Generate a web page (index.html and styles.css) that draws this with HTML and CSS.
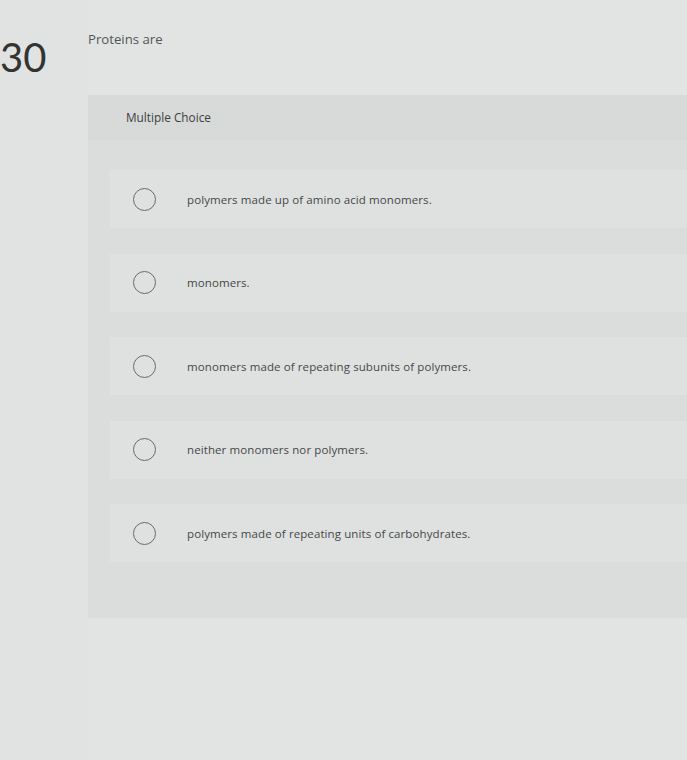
FILE: index.html
```html
<!DOCTYPE html>
<html lang="en">
<head>
<meta charset="utf-8">
<title>Question 30</title>
<link rel="stylesheet" href="styles.css">
</head>
<body>
<div class="page">
  <div class="num">30</div>
  <div class="main">
    <p class="prompt">Proteins are</p>
    <section class="card">
      <div class="card-head">Multiple Choice</div>
      <ul class="options">
        <li class="option"><span class="radio"></span><span class="label">polymers made up of amino acid monomers.</span></li>
        <li class="option"><span class="radio"></span><span class="label">monomers.</span></li>
        <li class="option"><span class="radio"></span><span class="label">monomers made of repeating subunits of polymers.</span></li>
        <li class="option"><span class="radio"></span><span class="label">neither monomers nor polymers.</span></li>
        <li class="option"><span class="radio"></span><span class="label">polymers made of repeating units of carbohydrates.</span></li>
      </ul>
    </section>
  </div>
</div>
</body>
</html>
```
FILE: styles.css
```css
html, body {
  margin: 0;
  padding: 0;
  height: 100%;
}
body {
  background: #e0e3e2;
  font-family: "Open Sans", Lato, sans-serif;
  color: #444;
}
.page {
  display: grid;
  grid-template-columns: 88px 1fr;
  min-height: 760px;
}
.num {
  font-family: Lato, "Open Sans", sans-serif;
  font-size: 40px;
  line-height: 1;
  color: #333;
  padding-top: 37px;
  background: #e0e3e2;
}
.main {
  display: flex;
  flex-direction: column;
  background: #e1e4e3;
}
.prompt {
  margin: 0;
  padding-top: 31px;
  font-size: 13.2px;
  line-height: 17px;
  color: #555;
}
.card {
  margin-top: 47px;
  background: #dadddc;
  padding-bottom: 56px;
}
.card-head {
  height: 45px;
  box-sizing: border-box;
  padding: 14px 0 0 38px;
  font-size: 11.8px;
  line-height: 16px;
  color: #3e3e3e;
  background: #d7dad9;
}
.options {
  list-style: none;
  margin: 0;
  padding: 30px 0 0 22px;
  display: flex;
  flex-direction: column;
  gap: 25.5px;
}
.option {
  height: 58px;
  display: flex;
  align-items: center;
  padding-left: 23px;
  background: #dee1e0;
}
.radio {
  width: 21px;
  height: 21px;
  border: 1.7px solid #6a6a6a;
  border-radius: 50%;
  flex: none;
}
.label {
  margin-left: 31px;
  font-size: 11.5px;
  color: #474747;
  letter-spacing: 0.1px;
}
```
